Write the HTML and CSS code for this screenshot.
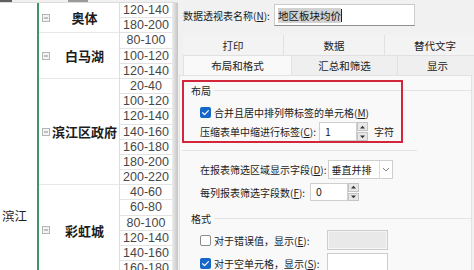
FILE: index.html
```html
<!DOCTYPE html>
<html lang="zh-CN">
<head>
<meta charset="utf-8">
<title>数据透视表选项</title>
<link rel="stylesheet" href="styles.css">
</head>
<body>
<div class="screen">
  <div class="sheet">
    <div class="hdr">
      <span class="hdr-a"></span>
      <span class="hdr-gap"></span>
      <span class="hdr-b"></span>
    </div>
    <div class="sheet-body">
      <div class="col-a"><span class="a-label">滨江</span></div>
      <div class="col-b">
        <div class="grp g2"><svg class="tog" viewBox="0 0 8 8" width="8" height="8"><rect x="0.5" y="0.5" width="7" height="7" fill="#f4f4f4" stroke="#b5b5b5"/><line x1="2" y1="4" x2="6" y2="4" stroke="#8c8c8c"/></svg><span class="gname">奥体</span></div>
        <div class="grp g3"><svg class="tog" viewBox="0 0 8 8" width="8" height="8"><rect x="0.5" y="0.5" width="7" height="7" fill="#f4f4f4" stroke="#b5b5b5"/><line x1="2" y1="4" x2="6" y2="4" stroke="#8c8c8c"/></svg><span class="gname">白马湖</span></div>
        <div class="grp g7"><svg class="tog" viewBox="0 0 8 8" width="8" height="8"><rect x="0.5" y="0.5" width="7" height="7" fill="#f4f4f4" stroke="#b5b5b5"/><line x1="2" y1="4" x2="6" y2="4" stroke="#8c8c8c"/></svg><span class="gname">滨江区政府</span></div>
        <div class="grp g6"><svg class="tog" viewBox="0 0 8 8" width="8" height="8"><rect x="0.5" y="0.5" width="7" height="7" fill="#f4f4f4" stroke="#b5b5b5"/><line x1="2" y1="4" x2="6" y2="4" stroke="#8c8c8c"/></svg><span class="gname">彩虹城</span></div>
      </div>
      <div class="col-c">
        <div class="v">120-140</div>
        <div class="v">180-200</div>
        <div class="v">80-100</div>
        <div class="v">100-120</div>
        <div class="v">120-140</div>
        <div class="v">20-40</div>
        <div class="v">100-120</div>
        <div class="v">120-140</div>
        <div class="v">140-160</div>
        <div class="v">160-180</div>
        <div class="v">180-200</div>
        <div class="v">200-220</div>
        <div class="v">40-60</div>
        <div class="v">60-80</div>
        <div class="v">80-100</div>
        <div class="v">120-140</div>
        <div class="v">140-160</div>
        <div class="v">160-180</div>
      </div>
      <div class="edge"></div>
    </div>
  </div>

  <div class="dialog">
    <div class="name-row">
      <span class="name-lbl">数据透视表名称(<u>N</u>):</span>
      <div class="name-input"><span class="sel">地区板块均价</span><span class="caret"></span></div>
    </div>
    <div class="tabs">
      <div class="tab-row r1">
        <div class="tab">打印</div>
        <div class="tab">数据</div>
        <div class="tab">替代文字</div>
      </div>
      <div class="tab-row r2">
        <div class="tab active">布局和格式</div>
        <div class="tab">汇总和筛选</div>
        <div class="tab">显示</div>
      </div>
    </div>
    <div class="panel">
      <div class="head"><span>布局</span><i class="rule"></i></div>
      <div class="row row-merge">
        <span class="cb on"><svg viewBox="0 0 11 11" width="11" height="11"><path d="M2.6 5.7 L4.6 7.6 L8.4 3.6" fill="none" stroke="#fff" stroke-width="1.2" stroke-linecap="round" stroke-linejoin="round"/></svg></span>
        <span class="txt">合并且居中排列带标签的单元格(<u>M</u>)</span>
      </div>
      <div class="row row-indent">
        <span class="txt">压缩表单中缩进行标签(<u>C</u>):</span>
        <div class="spin">
          <div class="spin-field">1</div>
          <div class="spin-btns">
            <span class="sb"><svg viewBox="0 0 7 4" width="7" height="4"><path d="M1 3.5 L3.5 0.8 L6 3.5 Z" fill="#333"/></svg></span>
            <span class="sb"><svg viewBox="0 0 7 4" width="7" height="4"><path d="M1 0.5 L3.5 3.2 L6 0.5 Z" fill="#333"/></svg></span>
          </div>
        </div>
        <span class="unit">字符</span>
      </div>
      <div class="divider"></div>
      <div class="row row-field">
        <span class="txt">在报表筛选区域显示字段(<u>D</u>):</span>
        <div class="select">
          <span class="select-val">垂直并排</span>
          <span class="select-arrow"><svg viewBox="0 0 8 5" width="8" height="5"><path d="M1 1 L4 4 L7 1" fill="none" stroke="#777" stroke-width="0.9"/></svg></span>
        </div>
      </div>
      <div class="row row-count">
        <span class="txt">每列报表筛选字段数(<u>F</u>):</span>
        <div class="spin">
          <div class="spin-field">0</div>
          <div class="spin-btns">
            <span class="sb"><svg viewBox="0 0 7 4" width="7" height="4"><path d="M1 3.5 L3.5 0.8 L6 3.5 Z" fill="#333"/></svg></span>
            <span class="sb"><svg viewBox="0 0 7 4" width="7" height="4"><path d="M1 0.5 L3.5 3.2 L6 0.5 Z" fill="#333"/></svg></span>
          </div>
        </div>
      </div>
      <div class="head head-fmt"><span>格式</span><i class="rule"></i></div>
      <div class="row row-err">
        <span class="cb"></span>
        <span class="txt opt-lbl">对于错误值，显示(<u>E</u>):</span>
        <div class="box box-off"></div>
      </div>
      <div class="row row-empty">
        <span class="cb on"><svg viewBox="0 0 11 11" width="11" height="11"><path d="M2.6 5.7 L4.6 7.6 L8.4 3.6" fill="none" stroke="#fff" stroke-width="1.2" stroke-linecap="round" stroke-linejoin="round"/></svg></span>
        <span class="txt opt-lbl">对于空单元格，显示(<u>S</u>):</span>
        <div class="box"></div>
      </div>
      <div class="redbox"></div>
    </div>
  </div>
</div>
</body>
</html>
```

FILE: styles.css
```css
* { box-sizing: border-box; margin: 0; padding: 0; }

html, body {
  width: 474px;
  height: 270px;
  overflow: hidden;
  background: #ffffff;
}

body {
  font-family: "Noto Sans CJK SC", "Noto Sans", sans-serif;
  color: #222222;
}

.screen {
  display: flex;
  width: 474px;
  height: 270px;
  overflow: hidden;
}

/* ---------- spreadsheet ---------- */
.sheet {
  width: 178px;
  flex: none;
  display: flex;
  flex-direction: column;
  background: #ffffff;
}

.hdr {
  height: 3px;
  flex: none;
  display: flex;
  background: #f1f1f1;
  border-bottom: 1px solid #dcdcdc;
}
.hdr-a { width: 12px; background: #5f5f5f; }
.hdr-gap { width: 56px; }
.hdr-b { width: 20px; background: #9a9a9a; }

.sheet-body {
  display: flex;
  flex: 1;
  min-height: 0;
}

.col-a {
  width: 39px;
  flex: none;
  border-right: 2px solid #3e9466;
  padding: 205px 0 0 2px;
  font-size: 12.5px;
  line-height: 16px;
  color: #1f1f1f;
}

.col-b {
  width: 81px;
  flex: none;
  border-right: 1px solid #dedede;
  display: flex;
  flex-direction: column;
}

.grp {
  flex: none;
  display: flex;
  align-items: center;
  padding-left: 3px;
  border-bottom: 1px solid #e8e8e8;
}
.g2 { height: 30.4px; }
.g3 { height: 45.6px; }
.g7 { height: 106.4px; }
.g6 { height: 91.2px; }

.tog { flex: none; display: block; }

.gname {
  flex: 1;
  text-align: center;
  font-size: 13px;
  font-weight: bold;
  color: #1c1c1c;
}

.col-c {
  width: 52px;
  flex: none;
  display: flex;
  flex-direction: column;
}

.v {
  flex: none;
  height: 15.2px;
  border-bottom: 1px solid #e3e3e3;
  font-family: "Liberation Sans", Arial, sans-serif;
  font-size: 12.5px;
  line-height: 15px;
  text-align: center;
  color: #474747;
}

.edge {
  width: 6px;
  flex: none;
  background: linear-gradient(to right, #ededed, #c4c4c4);
}

/* ---------- dialog ---------- */
.dialog {
  flex: 1;
  min-width: 0;
  display: flex;
  flex-direction: column;
  background: #f1f1f1;
  padding-top: 4px;
  font-size: 10px;
  color: #1b1b1b;
}

.name-row {
  display: flex;
  align-items: center;
  height: 22px;
  padding-left: 5px;
}
.name-lbl { width: 91px; flex: none; white-space: nowrap; }

.name-input {
  width: 141px;
  height: 22px;
  display: flex;
  align-items: center;
  padding-left: 3px;
  background: #ffffff;
  border: 1px solid #cbcbcb;
  border-bottom-color: #8e8e8e;
  font-size: 10.5px;
}
.sel {
  background: #d2d2d2;
  line-height: 15px;
  color: #111;
}
.caret { width: 1px; height: 13px; background: #222; }

.tabs {
  margin-top: 9px;
  padding-left: 5px;
}

.tab-row {
  display: flex;
  height: 20px;
}

.tab {
  flex: none;
  display: flex;
  align-items: center;
  justify-content: center;
  border-right: 1px solid #e1e1e1;
  white-space: nowrap;
  color: #222;
  font-size: 10.5px;
}

.r1 .tab { width: 101px; background: #f3f3f3; }
.r2 .tab { background: #efefef; border-top: 1px solid #e1e1e1; }
.r2 .tab:nth-child(1) { width: 109px; }
.r2 .tab:nth-child(2) { width: 106px; }
.r2 .tab:nth-child(3) { width: 80px; }
.r2 .tab.active { background: #f9f9f9; border-left: 1px solid #e1e1e1; }

.panel {
  position: relative;
  flex: 1;
  margin-left: 1px;
  width: 293px;
  background: #f9f9f9;
  border-left: 1px solid #e2e2e2;
  border-right: 1px solid #e2e2e2;
  border-top: 1px solid #e2e2e2;
  padding-top: 7px;
}

.head {
  display: flex;
  align-items: center;
  height: 14px;
  margin-left: 11px;
}
.rule {
  flex: 1;
  height: 1px;
  margin-left: 3px;
  background: #e4e4e4;
}
.head-fmt { margin-top: 10px; }

.row {
  display: flex;
  align-items: center;
  margin-left: 20px;
  white-space: nowrap;
}

.row-merge { height: 18px; margin-top: 6px; }
.row-indent { height: 19px; margin-top: 1px; }
.row-field { height: 19px; margin-top: 9px; }
.row-count { height: 18px; margin-top: 4px; }
.row-err { height: 20px; margin-top: 5px; }
.row-empty { height: 20px; margin-top: 3px; }

.cb {
  width: 11px;
  height: 11px;
  flex: none;
  border-radius: 2px;
  border: 1px solid #8b8b8b;
  background: #ffffff;
  margin-right: 3px;
  display: flex;
}
.cb.on {
  border: none;
  background: #1467c8;
}
.cb svg { display: block; }

.opt-lbl { width: 113px; flex: none; }

.divider {
  margin: 9px 0 0 2px;
  width: 235px;
  height: 1px;
  background: #e4e4e4;
}

.spin {
  display: flex;
  height: 19px;
  margin-left: 3px;
}
.spin-field {
  width: 38px;
  height: 100%;
  background: #ffffff;
  border: 1px solid #cfcfcf;
  padding-left: 5px;
  line-height: 17px;
  font-size: 10.5px;
}
.spin-btns {
  width: 11px;
  display: flex;
  flex-direction: column;
  gap: 1px;
}
.sb {
  flex: 1;
  display: flex;
  align-items: center;
  justify-content: center;
  background: #e7e7e7;
  border: 1px solid #c3c3c3;
}
.sb svg { display: block; }

.row-count .spin { height: 18px; margin-left: 5px; }
.row-count .spin-field { line-height: 16px; }

.unit { margin-left: 6px; }

.select {
  display: flex;
  width: 65px;
  height: 19px;
  margin-left: 2px;
  background: #ffffff;
  border: 1px solid #cfcfcf;
}
.select-val {
  flex: 1;
  padding-left: 2px;
  line-height: 17px;
}
.select-arrow {
  width: 13px;
  border-left: 1px solid #dcdcdc;
  display: flex;
  align-items: center;
  justify-content: center;
}

.box {
  width: 61px;
  height: 20px;
  background: #ffffff;
  border: 1px solid #cdcdcd;
}
.box-off {
  background: #e9e9e9;
  box-shadow: inset 0 0 0 1px #f5f5f5;
}

.redbox {
  position: absolute;
  left: 2px;
  top: 4px;
  width: 221px;
  height: 63px;
  border: 2px solid #d3263a;
  pointer-events: none;
}
```
